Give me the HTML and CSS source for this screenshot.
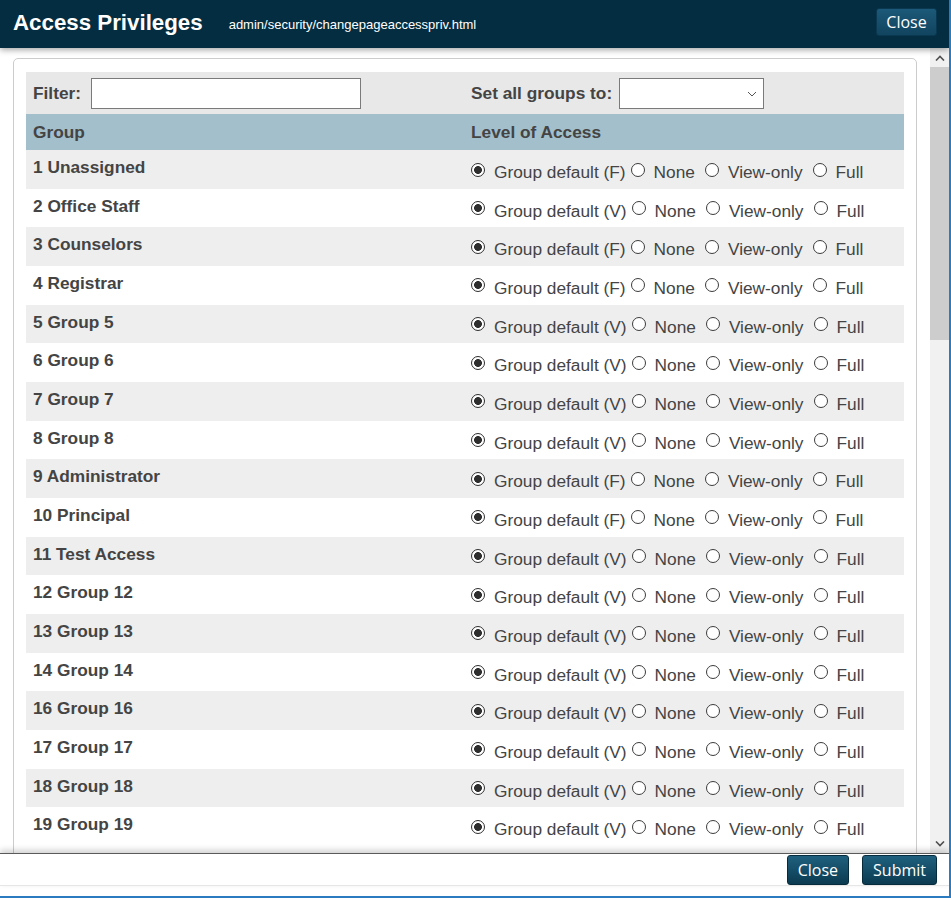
FILE: index.html
```html
<!DOCTYPE html>
<html lang="en">
<head>
<meta charset="utf-8">
<title>Access Privileges</title>
<link rel="stylesheet" href="styles.css">
</head>
<body>
<div class="dialog">
  <header class="header">
    <h1 class="title">Access Privileges</h1>
    <span class="path">admin/security/changepageaccesspriv.html</span>
    <button class="btn btn-head" type="button">Close</button>
  </header>
  <div class="main">
    <div class="content">
      <div class="card">
        <table class="grid">
          <colgroup><col class="c1"><col class="c2"></colgroup>
          <thead>
            <tr class="filter-row">
              <td><div class="fcell"><label class="flabel" for="flt">Filter:</label><input id="flt" class="finput" type="text"></div></td>
              <td><div class="fcell"><label class="flabel" for="setall">Set all groups to:</label><span class="selwrap"><select id="setall" class="fselect"><option></option></select><svg class="chev" width="10" height="6" viewBox="0 0 10 6"><path d="M1 1 L5 5 L9 1" fill="none" stroke="#555" stroke-width="1"/></svg></span></div></td>
            </tr>
            <tr class="head-row">
              <th>Group</th>
              <th>Level of Access</th>
            </tr>
          </thead>
          <tbody id="rows"></tbody>
        </table>
      </div>
    </div>
    <div class="scrollbar">
      <div class="sb-arrow"><svg width="10" height="6" viewBox="0 0 10 6"><path d="M1 5.5 L5 1.5 L9 5.5" fill="none" stroke="#505050" stroke-width="1.6"/></svg></div>
      <div class="sb-track"><div class="sb-thumb"></div></div>
      <div class="sb-arrow"><svg width="10" height="6" viewBox="0 0 10 6"><path d="M1 0.5 L5 4.5 L9 0.5" fill="none" stroke="#505050" stroke-width="1.6"/></svg></div>
    </div>
  </div>
  <footer class="footer">
    <button class="btn btn-foot" type="button">Close</button>
    <button class="btn btn-foot" type="button">Submit</button>
  </footer>
</div>
<script src="app.js"></script>
</body>
</html>
```
FILE: app.js
```js
var groups = [
  [1, "Unassigned", "F"], [2, "Office Staff", "V"], [3, "Counselors", "F"],
  [4, "Registrar", "F"], [5, "Group 5", "V"], [6, "Group 6", "V"],
  [7, "Group 7", "V"], [8, "Group 8", "V"], [9, "Administrator", "F"],
  [10, "Principal", "F"], [11, "Test Access", "V"], [12, "Group 12", "V"],
  [13, "Group 13", "V"], [14, "Group 14", "V"], [16, "Group 16", "V"],
  [17, "Group 17", "V"], [18, "Group 18", "V"], [19, "Group 19", "V"]
];
var tbody = document.getElementById("rows");
var html = "";
groups.forEach(function (g) {
  var n = "g" + g[0];
  html += '<tr class="row">' +
    '<td class="gname">' + g[0] + ' ' + g[1] + '</td>' +
    '<td class="gopts">' +
      '<label class="opt opt-first"><input type="radio" name="' + n + '" checked><span>Group default (' + g[2] + ')</span></label>' +
      '<label class="opt"><input type="radio" name="' + n + '"><span>None</span></label>' +
      '<label class="opt"><input type="radio" name="' + n + '"><span>View-only</span></label>' +
      '<label class="opt"><input type="radio" name="' + n + '"><span>Full</span></label>' +
    '</td></tr>';
});
tbody.innerHTML = html;
```
FILE: styles.css
```css
html, body {
  margin: 0;
  padding: 0;
  background: #ffffff;
}
body {
  font-family: "Liberation Sans", Arial, sans-serif;
  color: #444444;
}
.dialog {
  width: 949px;
  height: 896px;
  border-right: 2px solid #2b7bc1;
  border-bottom: 2px solid #2b7bc1;
  display: flex;
  flex-direction: column;
  overflow: hidden;
  background: #ffffff;
}
.header {
  flex: none;
  height: 48px;
  background: #052d41;
  display: flex;
  align-items: flex-start;
  padding: 0 12px 0 13px;
  box-sizing: border-box;
  position: relative;
  z-index: 2;
  box-shadow: 0 2px 6px rgba(0, 0, 0, 0.35);
}
.title {
  margin: 10px 0 0 0;
  font-size: 22.3px;
  line-height: 26px;
  font-weight: bold;
  color: #ffffff;
}
.path {
  margin: 17px 0 0 26px;
  font-size: 13px;
  line-height: 16px;
  color: #ffffff;
}
.btn {
  font-family: "Open Sans", "Liberation Sans", sans-serif;
  font-size: 16px;
  color: #ffffff;
  border: 1px solid #062b3c;
  border-radius: 3px;
  padding: 0 10px;
  background: linear-gradient(#1f607e, #0b3b51);
  cursor: pointer;
  box-sizing: border-box;
}
.btn-head {
  margin: 8px 0 0 auto;
  height: 28px;
  width: 61px;
  background: linear-gradient(#1c5978, #11445f);
  border-color: #0a3850;
  padding: 0;
}
.main {
  flex: 1;
  min-height: 0;
  display: flex;
}
.content {
  flex: 1;
  min-width: 0;
  overflow: hidden;
}
.card {
  margin: 10px 13px 0 13px;
  border: 1px solid #cccccc;
  border-radius: 5px;
  padding: 13px 12px;
}
.grid {
  width: 100%;
  border-collapse: collapse;
  table-layout: fixed;
  font-size: 17.3px;
}
.c1 { width: 438px; }
.filter-row td {
  background: #e8e8e8;
  height: 42px;
  padding: 0 7px;
  box-sizing: border-box;
}
.fcell {
  display: flex;
  align-items: center;
}
.flabel {
  font-weight: bold;
  line-height: 20px;
}
.finput {
  margin: 0 0 0 10px;
  width: 270px;
  height: 31px;
  box-sizing: border-box;
  border: 1px solid #7a7a7a;
  background: #ffffff;
  padding: 0 4px;
  font-size: 15px;
}
.selwrap {
  position: relative;
  margin-left: 7px;
  display: inline-flex;
}
.fselect {
  appearance: none;
  -webkit-appearance: none;
  width: 145px;
  height: 31px;
  box-sizing: border-box;
  border: 1px solid #7a7a7a;
  border-radius: 0;
  background: #ffffff;
  margin: 0;
}
.chev {
  position: absolute;
  right: 7px;
  top: 13px;
}
.head-row th {
  background: #a3bfcb;
  height: 36px;
  box-sizing: border-box;
  text-align: left;
  font-weight: bold;
  padding: 8px 7px 0 7px;
  line-height: 20px;
  vertical-align: top;
  color: #444444;
}
.row td {
  height: 38.67px;
  box-sizing: border-box;
  vertical-align: top;
  line-height: 20px;
  padding: 0 7px;
}
.row:nth-child(odd) td {
  background: #eeeeee;
}
.gname {
  font-weight: bold;
  padding-top: 7px !important;
  white-space: nowrap;
}
.gopts {
  padding-top: 10.5px !important;
  white-space: nowrap;
}
.opt {
  display: inline-flex;
  align-items: flex-start;
  margin-left: 10px;
}
.opt-first {
  margin-left: 0;
  margin-right: -5px;
}
.opt input {
  appearance: none;
  -webkit-appearance: none;
  width: 14px;
  height: 14px;
  margin: 0.5px 9px 0 0;
  border: 1.2px solid #3c3c3c;
  border-radius: 50%;
  background: #ffffff;
  box-sizing: border-box;
  flex: none;
}
.opt input:checked {
  border-color: #2e2e2e;
  background: radial-gradient(circle, #2e2e2e 0, #2e2e2e 3.6px, #ffffff 4.2px);
}
.scrollbar {
  flex: none;
  width: 19px;
  display: flex;
  flex-direction: column;
  background: #f1f1f1;
}
.sb-arrow {
  height: 19px;
  flex: none;
  display: flex;
  align-items: center;
  justify-content: center;
}
.sb-track {
  flex: 1;
}
.sb-thumb {
  height: 273px;
  background: #cdcdcd;
}
.footer {
  flex: none;
  display: flex;
  justify-content: flex-end;
  gap: 13px;
  border-top: 1px solid #5a5a5a;
  border-bottom: 1px solid #e6e6e6;
  padding: 1px 12px 0 0;
  margin-bottom: 10px;
  background: #ffffff;
  position: relative;
  z-index: 2;
  box-shadow: 0 -3px 6px rgba(0, 0, 0, 0.18);
}
.btn-foot {
  height: 30px;
}
```
